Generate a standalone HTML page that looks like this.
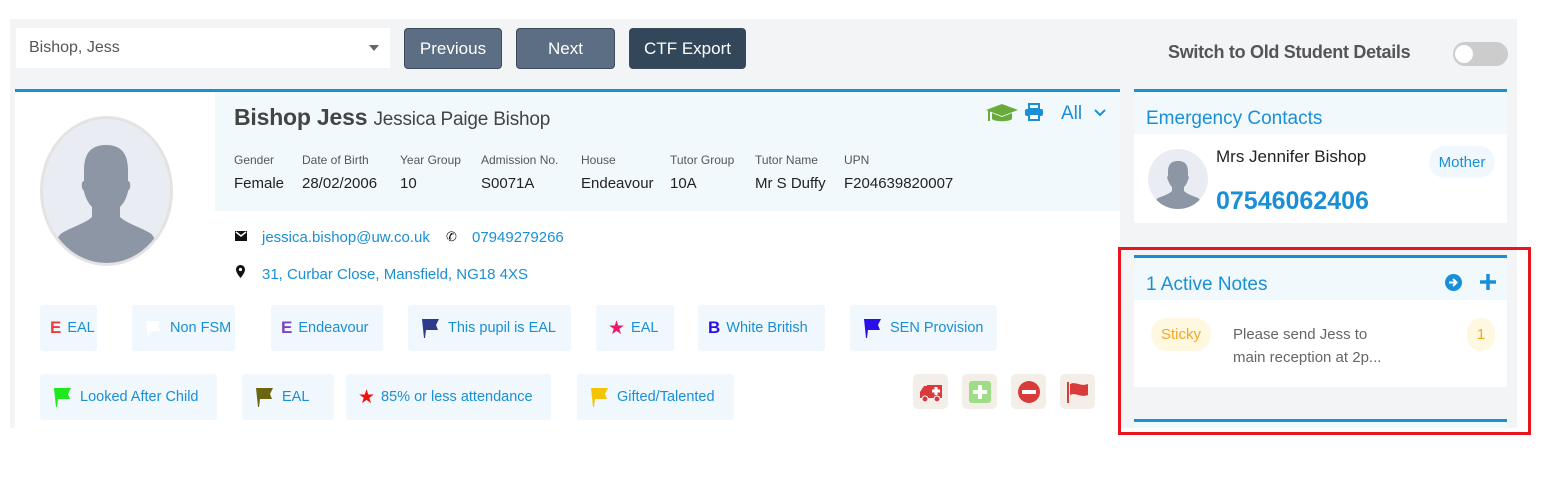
<!DOCTYPE html>
<html><head><meta charset="utf-8"><style>
*{box-sizing:border-box;margin:0;padding:0}
body{width:1553px;height:479px;background:#fff;font-family:"Liberation Sans",sans-serif;position:relative;overflow:hidden}
.a{position:absolute}
.btn{position:absolute;top:28px;height:41px;border-radius:4px;color:#fff;font-size:17px;display:flex;align-items:center;justify-content:center;border:1px solid #3b4b5c}
.lab{position:absolute;top:153px;font-size:12px;color:#555}
.val{position:absolute;top:175px;font-size:15px;color:#222}
.bd{position:absolute;height:46px;background:#f0f8fd;border-radius:3px;display:flex;align-items:center;padding-left:10px;font-size:14.5px;color:#1a8fd6;gap:6px}
.ic{position:absolute;top:374px;width:35px;height:35px;background:#f3efe8;border-radius:5px;display:flex;align-items:center;justify-content:center}
</style></head><body>
<div class="a" style="left:10px;top:19px;width:1507px;height:409px;background:#f3f4f6"></div>
<div class="a" style="left:16px;top:28px;width:374px;height:40px;background:#fff"></div>
<div class="a" style="left:29px;top:39px;font-size:16px;color:#555">Bishop, Jess</div>
<div class="a" style="left:369px;top:45px;width:0;height:0;border-left:5px solid transparent;border-right:5px solid transparent;border-top:6px solid #666"></div>
<div class="btn" style="left:404px;width:98px;background:#5b6e83">Previous</div>
<div class="btn" style="left:516px;width:99px;background:#5b6e83">Next</div>
<div class="btn" style="left:629px;width:117px;background:#33475b">CTF Export</div>
<div class="a" style="left:1168px;top:42px;font-size:18px;color:#555;font-weight:bold;letter-spacing:-0.3px">Switch to Old Student Details</div>
<div class="a" style="left:1453px;top:42px;width:55px;height:24px;border-radius:12px;background:#ccc"></div>
<div class="a" style="left:1455px;top:45px;width:18px;height:18px;border-radius:9px;background:#fff"></div>

<div class="a" style="left:15px;top:89px;width:1105px;height:339px;background:#fff;border-top:3px solid #1a8fd6"></div>
<div class="a" style="left:215px;top:92px;width:905px;height:119px;background:#f2f9fd"></div>
<div class="a" style="left:40px;top:116px;width:133px;height:150px;border-radius:50%;background:#e9ecf3;border:3px solid #e3e3e3;overflow:hidden">
<svg width="127" height="144" viewBox="0 0 127 144"><path d="M63 26c-18 0-22 12-22 26v10c-3 0-3 8 0 10 1 6 4 12 8 16v10c-6 6-20 10-30 16-6 4-8 14-8 30h104c0-16-2-26-8-30-10-6-24-10-30-16V88c4-4 7-10 8-16 3-2 3-10 0-10V52c0-14-4-26-22-26z" fill="#8c96a5"/></svg></div>
<div class="a" style="left:234px;top:104px;font-size:23px;font-weight:bold;color:#444;letter-spacing:-0.2px">Bishop Jess <span style="font-size:19px;font-weight:normal">Jessica Paige Bishop</span></div>
<svg class="a" style="left:985px;top:102px" width="34" height="22" viewBox="0 0 34 22"><path d="M17 2L1 8l16 6 16-6z" fill="#6aaa3a"/><path d="M7 11v6c3 3 17 3 20 0v-6l-10 4z" fill="#6aaa3a"/><path d="M4 9v10" stroke="#6aaa3a" stroke-width="2"/></svg>
<svg class="a" style="left:1024px;top:103px" width="20" height="18" viewBox="0 0 20 18"><rect x="5" y="1" width="10" height="5" fill="none" stroke="#1a8fd6" stroke-width="2"/><rect x="1" y="6" width="18" height="7" rx="2" fill="#1a8fd6"/><rect x="5" y="11" width="10" height="6" fill="#fff" stroke="#1a8fd6" stroke-width="2"/></svg>
<div class="a" style="left:1061px;top:103px;font-size:19px;color:#1a8fd6">All</div>
<svg class="a" style="left:1094px;top:109px" width="12" height="8"><path d="M1 1l5 5 5-5" stroke="#1a8fd6" stroke-width="2" fill="none"/></svg>

<div class="lab" style="left:234px">Gender</div><div class="val" style="left:234px">Female</div>
<div class="lab" style="left:302px">Date of Birth</div><div class="val" style="left:302px">28/02/2006</div>
<div class="lab" style="left:400px">Year Group</div><div class="val" style="left:400px">10</div>
<div class="lab" style="left:481px">Admission No.</div><div class="val" style="left:481px">S0071A</div>
<div class="lab" style="left:581px">House</div><div class="val" style="left:581px">Endeavour</div>
<div class="lab" style="left:670px">Tutor Group</div><div class="val" style="left:670px">10A</div>
<div class="lab" style="left:755px">Tutor Name</div><div class="val" style="left:755px">Mr S Duffy</div>
<div class="lab" style="left:844px">UPN</div><div class="val" style="left:844px">F204639820007</div>

<svg class="a" style="left:235px;top:231px" width="12" height="10"><rect width="12" height="10" fill="#111"/><path d="M1 1l5 4 5-4" stroke="#fff" stroke-width="1.5" fill="none"/></svg>
<div class="a" style="left:262px;top:229px;font-size:15px;color:#1a8fd6">jessica.bishop@uw.co.uk</div>
<div class="a" style="left:446px;top:229px;font-size:13px;color:#111">✆</div>
<div class="a" style="left:472px;top:229px;font-size:15px;color:#1a8fd6">07949279266</div>
<svg class="a" style="left:236px;top:265px" width="9" height="13"><path d="M4.5 0C2 0 0 2 0 4.5 0 8 4.5 13 4.5 13S9 8 9 4.5C9 2 7 0 4.5 0z" fill="#111"/><circle cx="4.5" cy="4.5" r="1.6" fill="#fff"/></svg>
<div class="a" style="left:262px;top:266px;font-size:15px;color:#1a8fd6">31, Curbar Close, Mansfield, NG18 4XS</div>

<div class="bd" style="left:40px;top:305px;width:57px"><b style="color:#f03c3c;font-size:17px">E</b>EAL</div>
<div class="bd" style="left:132px;top:305px;width:103px;padding-left:12px"><svg width="20" height="18"><path d="M2 2h15l-3 5 2 5H6l-1 6H4z" fill="#fff"/></svg>Non FSM</div>
<div class="bd" style="left:271px;top:305px;width:112px"><b style="color:#7a44c8;font-size:17px">E</b>Endeavour</div>
<div class="bd" style="left:408px;top:305px;width:163px;padding-left:12px"><svg width="22" height="20"><path d="M2 1h17l-3 6 2 5H6l-1 8H4z" fill="#2e3a8c"/></svg>This pupil is EAL</div>
<div class="bd" style="left:596px;top:305px;width:78px;padding-left:12px"><span style="color:#f0186c;font-size:19px">★</span>EAL</div>
<div class="bd" style="left:698px;top:305px;width:127px"><b style="color:#2a10e8;font-size:17px">B</b>White British</div>
<div class="bd" style="left:850px;top:305px;width:147px;padding-left:12px"><svg width="22" height="20"><path d="M2 1h17l-3 6 2 5H6l-1 8H4z" fill="#2a10e8"/></svg>SEN Provision</div>

<div class="bd" style="left:40px;top:374px;width:177px;padding-left:12px"><svg width="22" height="20"><path d="M2 1h17l-3 6 2 5H6l-1 8H4z" fill="#1ee81e"/></svg>Looked After Child</div>
<div class="bd" style="left:242px;top:374px;width:92px;padding-left:12px"><svg width="22" height="20"><path d="M2 1h17l-3 6 2 5H6l-1 8H4z" fill="#6b6410"/></svg>EAL</div>
<div class="bd" style="left:346px;top:374px;width:205px;padding-left:12px"><span style="color:#f01010;font-size:19px">★</span>85% or less attendance</div>
<div class="bd" style="left:577px;top:374px;width:157px;padding-left:12px"><svg width="22" height="20"><path d="M2 1h17l-3 6 2 5H6l-1 8H4z" fill="#f5c400"/></svg>Gifted/Talented</div>

<div class="ic" style="left:913px"><svg width="26" height="22"><path d="M9 4h15v13H2v-6l4-6h3z" fill="#d93b3b"/><path d="M14 10h8M18 6v8" stroke="#fff" stroke-width="3"/><circle cx="7" cy="18" r="3" fill="#d93b3b" stroke="#fff"/><circle cx="19" cy="18" r="3" fill="#d93b3b" stroke="#fff"/></svg></div>
<div class="ic" style="left:962px"><svg width="22" height="22"><rect width="22" height="22" rx="3" fill="#9edc85"/><path d="M11 4v14M4 11h14" stroke="#fff" stroke-width="4"/></svg></div>
<div class="ic" style="left:1011px"><svg width="22" height="22"><circle cx="11" cy="11" r="11" fill="#d93b3b"/><rect x="4" y="9" width="14" height="4" fill="#fff"/></svg></div>
<div class="ic" style="left:1060px"><svg width="24" height="22"><path d="M2 1v21" stroke="#d93b3b" stroke-width="2"/><path d="M4 3c6-3 10 3 18 0v11c-8 3-12-3-18 0z" fill="#d93b3b"/></svg></div>

<div class="a" style="left:1134px;top:89px;width:373px;height:134px;background:#fff;border-top:3px solid #1a8fd6"></div>
<div class="a" style="left:1134px;top:92px;width:373px;height:42px;background:#f2f9fd"></div>
<div class="a" style="left:1146px;top:108px;font-size:19px;color:#1a8fd6">Emergency Contacts</div>
<div class="a" style="left:1148px;top:149px;width:60px;height:60px;border-radius:50%;background:#e9ecf3;overflow:hidden"><svg width="60" height="60"><path d="M30 12c-8 0-10 5-10 11v4c-1 0-1 3 0 4 1 3 2 5 4 7v4c-3 3-9 5-14 7-3 2-4 6-4 11h48c0-5-1-9-4-11-5-2-11-4-14-7v-4c2-2 3-4 4-7 1-1 1-4 0-4v-4c0-6-2-11-10-11z" fill="#8c96a5"/></svg></div>
<div class="a" style="left:1216px;top:147px;font-size:17px;color:#222">Mrs Jennifer Bishop</div>
<div class="a" style="left:1216px;top:187px;font-size:25px;font-weight:bold;color:#1a8fd6">07546062406</div>
<div class="a" style="left:1429px;top:146px;width:66px;height:32px;border-radius:16px;background:#f0f8fd;color:#1a8fd6;font-size:15px;display:flex;align-items:center;justify-content:center">Mother</div>

<div class="a" style="left:1134px;top:255px;width:373px;height:132px;background:#fff;border-top:3px solid #1a8fd6"></div>
<div class="a" style="left:1134px;top:258px;width:373px;height:42px;background:#f2f9fd"></div>
<div class="a" style="left:1146px;top:274px;font-size:19px;color:#1a8fd6">1 Active Notes</div>
<svg class="a" style="left:1445px;top:274px" width="17" height="17"><circle cx="8.5" cy="8.5" r="8.5" fill="#1a8fd6"/><path d="M4 8.5h7M8 5l3.5 3.5L8 12" stroke="#fff" stroke-width="2" fill="none"/></svg>
<svg class="a" style="left:1480px;top:274px" width="16" height="16"><path d="M8 0v16M0 8h16" stroke="#1a8fd6" stroke-width="3.5"/></svg>
<div class="a" style="left:1151px;top:318px;width:60px;height:33px;border-radius:16px;background:#fff8e1;color:#f5a623;font-size:15px;display:flex;align-items:center;justify-content:center">Sticky</div>
<div class="a" style="left:1233px;top:323px;font-size:15px;color:#666;line-height:23px">Please send Jess to<br>main reception at 2p...</div>
<div class="a" style="left:1467px;top:318px;width:28px;height:33px;border-radius:14px;background:#fff8e1;color:#f5a623;font-size:15px;display:flex;align-items:center;justify-content:center">1</div>
<div class="a" style="left:1134px;top:419px;width:373px;height:9px;background:#f2f9fd;border-top:3px solid #1a8fd6"></div>

<div class="a" style="left:1118px;top:247px;width:413px;height:188px;border:3px solid #e8141e"></div>
</body></html>
